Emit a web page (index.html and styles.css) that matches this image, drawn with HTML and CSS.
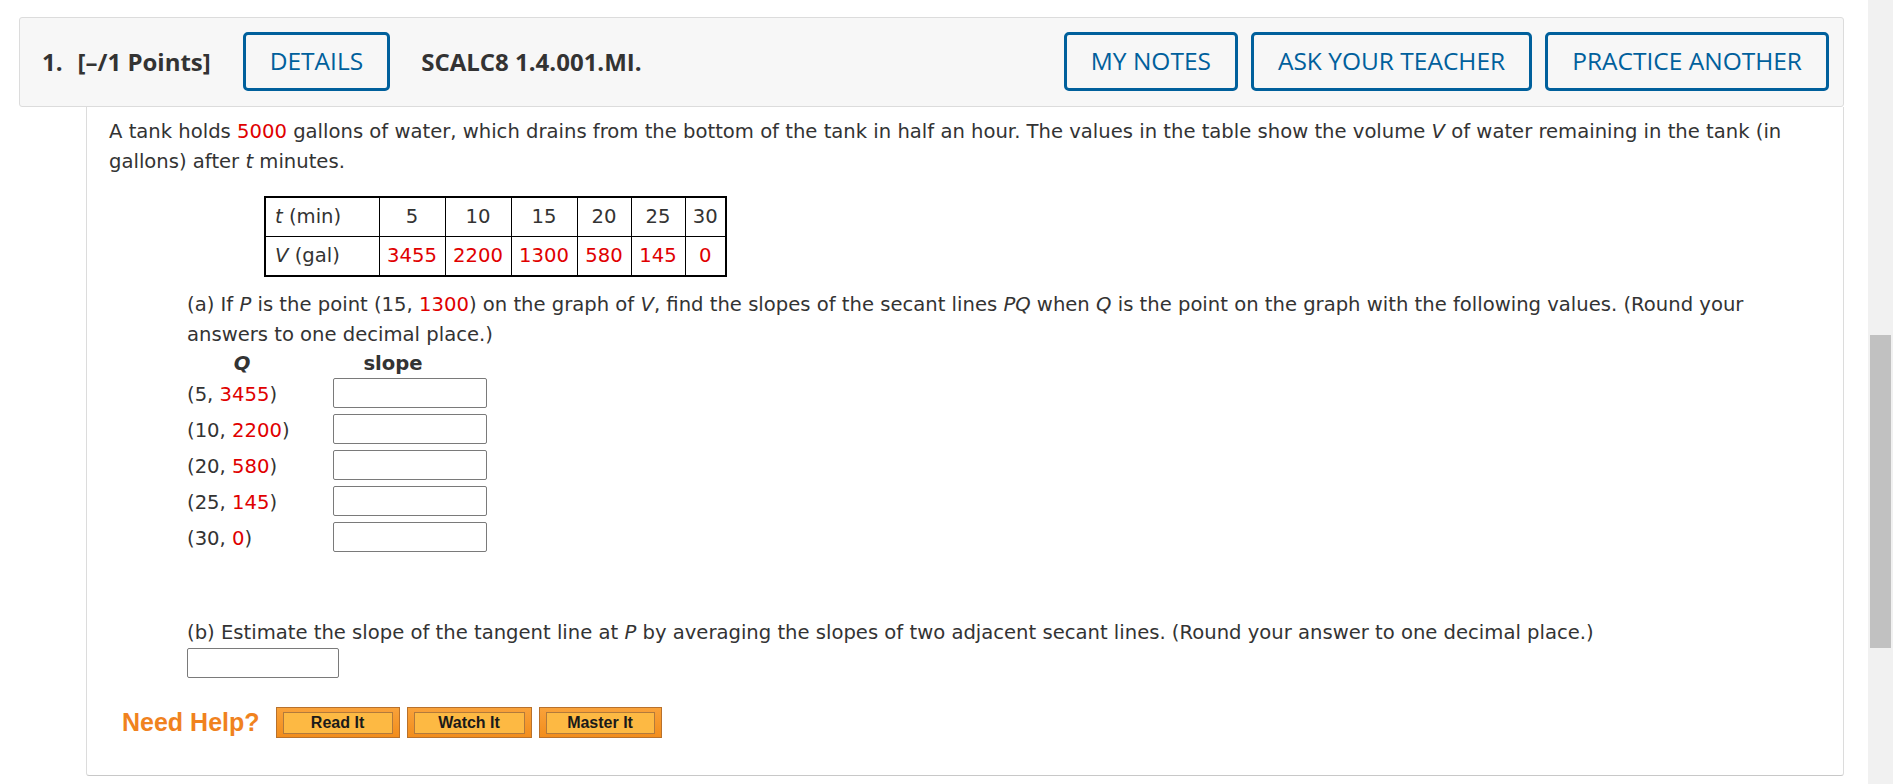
FILE: index.html
```html
<!DOCTYPE html>
<html lang="en">
<head>
<meta charset="utf-8">
<title>SCALC8 1.4.001.MI.</title>
<link rel="stylesheet" href="styles.css">
</head>
<body>
<div class="page">
  <main class="main">
    <div class="qhead">
      <span class="qnum">1.</span>
      <span class="qpts">[–/1 Points]</span>
      <button class="hbtn">DETAILS</button>
      <span class="qcode">SCALC8 1.4.001.MI.</span>
      <span class="spacer"></span>
      <div class="hbtns">
        <button class="hbtn">MY NOTES</button>
        <button class="hbtn">ASK YOUR TEACHER</button>
        <button class="hbtn">PRACTICE ANOTHER</button>
      </div>
    </div>
    <div class="qbody">
      <p class="txt">A tank holds <span class="red">5000</span> gallons of water, which drains from the bottom of the tank in half an hour. The values in the table show the volume <i>V</i> of water remaining in the tank (in gallons) after <i>t</i> minutes.</p>
      <table class="data">
        <colgroup>
          <col class="c1"><col class="c2"><col class="c2"><col class="c2"><col class="c3"><col class="c3"><col class="c4">
        </colgroup>
        <tr><td class="lbl"><i>t</i> (min)</td><td>5</td><td>10</td><td>15</td><td>20</td><td>25</td><td>30</td></tr>
        <tr><td class="lbl"><i>V</i> (gal)</td><td class="red">3455</td><td class="red">2200</td><td class="red">1300</td><td class="red">580</td><td class="red">145</td><td class="red">0</td></tr>
      </table>
      <div class="part">
        <p class="txt">(a) If <i>P</i> is the point (15, <span class="red">1300</span>) on the graph of <i>V</i>, find the slopes of the secant lines <i>PQ</i> when <i>Q</i> is the point on the graph with the following values. (Round your answers to one decimal place.)</p>
        <div class="qhdr"><span class="hq"><b><i>Q</i></b></span><span class="hs"><b>slope</b></span></div>
        <div class="qrow"><span class="ql">(5, <span class="red">3455</span>)</span><input class="ans" type="text"></div>
        <div class="qrow"><span class="ql">(10, <span class="red">2200</span>)</span><input class="ans" type="text"></div>
        <div class="qrow"><span class="ql">(20, <span class="red">580</span>)</span><input class="ans" type="text"></div>
        <div class="qrow"><span class="ql">(25, <span class="red">145</span>)</span><input class="ans" type="text"></div>
        <div class="qrow"><span class="ql">(30, <span class="red">0</span>)</span><input class="ans" type="text"></div>
        <p class="txt partb">(b) Estimate the slope of the tangent line at <i>P</i> by averaging the slopes of two adjacent secant lines. (Round your answer to one decimal place.)</p>
        <input class="ans ansb" type="text">
      </div>
      <div class="help">
        <span class="needhelp">Need Help?</span>
        <span class="obtn w1"><span class="ibtn">Read It</span></span>
        <span class="obtn w2"><span class="ibtn">Watch It</span></span>
        <span class="obtn w3"><span class="ibtn">Master It</span></span>
      </div>
    </div>
  </main>
  <div class="sbar"><div class="thumb"></div></div>
</div>
</body>
</html>
```
FILE: styles.css
```css
html, body {
  margin: 0;
  padding: 0;
  height: 784px;
  overflow: hidden;
  background: #fff;
}
.page {
  display: flex;
  height: 784px;
}
.main {
  flex: 1;
  padding: 17px 24px 0 19px;
  min-width: 0;
}
.qhead {
  display: flex;
  align-items: center;
  background: #f7f7f7;
  border: 1px solid #dcdcdc;
  border-radius: 3px;
  padding: 14px 14px 15px 22px;
  font-family: "Open Sans", sans-serif;
  color: #333;
}
.qnum, .qpts, .qcode {
  font-weight: 700;
  font-size: 24px;
}
.qnum { margin-right: 15px; }
.qpts { margin-right: 32px; }
.qcode { margin-left: 31px; }
.spacer { flex: 1; }
.hbtns {
  display: flex;
  gap: 13px;
}
.hbtn {
  font-family: "Open Sans", sans-serif;
  font-size: 24.5px;
  color: #00609c;
  background: transparent;
  border: 3px solid #00609c;
  border-radius: 5px;
  height: 59px;
  padding: 0 24px;
  box-sizing: border-box;
  line-height: 1;
  cursor: pointer;
}
.qbody {
  margin-left: 67px;
  border-left: 1px solid #dcdcdc;
  border-right: 1px solid #dcdcdc;
  border-bottom: 1px solid #c8c8c8;
  border-radius: 0 0 3px 3px;
  padding: 10px 22px 37px 22px;
  font-family: "DejaVu Sans", Verdana, sans-serif;
  font-size: 19.6px;
  color: #333;
}
.txt {
  margin: 0;
  line-height: 30px;
}
.red { color: #e00000; }
.data {
  border-collapse: collapse;
  table-layout: fixed;
  border: 2px solid #000;
  margin: 19px 0 0 155px;
  width: 461px;
}
.data col.c1 { width: 114px; }
.data col.c2 { width: 66px; }
.data col.c3 { width: 54px; }
.data col.c4 { width: 41px; }
.data td {
  border: 1px solid #000;
  height: 38px;
  padding: 0;
  text-align: center;
  line-height: 24px;
  white-space: nowrap;
}
.data td.lbl {
  text-align: left;
  padding-left: 9px;
}
.part {
  margin: 13px 0 0 78px;
}
.qhdr {
  display: flex;
  height: 28px;
  line-height: 28px;
}
.hq { width: 110px; text-align: center; }
.hs { width: 192px; text-align: center; }
.qrow {
  display: flex;
  align-items: flex-start;
  height: 36px;
}
.ql {
  width: 146px;
  line-height: 36px;
  margin-top: -1px;
  white-space: nowrap;
}
.ans {
  width: 154px;
  height: 30px;
  box-sizing: border-box;
  border: 1px solid #7a7a7a;
  border-radius: 2px;
  background: #fff;
  margin: 0;
  padding: 0 4px;
  font: inherit;
}
.partb { margin-top: 60px; }
.ansb {
  display: block;
  width: 152px;
}
.help {
  display: flex;
  align-items: center;
  gap: 7px;
  margin: 29px 0 0 13px;
  height: 31px;
}
.needhelp {
  font-family: "Liberation Sans", Arial, sans-serif;
  font-weight: 700;
  font-size: 25px;
  color: #f0821e;
  margin-right: 9px;
}
.obtn {
  display: flex;
  box-sizing: border-box;
  height: 31px;
  border: 1px solid #b8712c;
  background: linear-gradient(#f9a23a, #f28d1c);
  padding: 4px 6px 3px 6px;
}
.w1 { width: 124px; }
.w2 { width: 125px; }
.w3 { width: 123px; }
.ibtn {
  flex: 1;
  display: flex;
  align-items: center;
  justify-content: center;
  border: 1px solid #b27a3c;
  background: #fdb943;
  font-family: "Liberation Sans", Arial, sans-serif;
  font-weight: 700;
  font-size: 16px;
  color: #1a1a1a;
}
.sbar {
  width: 25px;
  background: #f1f1f1;
  flex: none;
}
.thumb {
  margin: 335px 0 0 2px;
  width: 21px;
  height: 313px;
  background: #c1c1c1;
}
```
